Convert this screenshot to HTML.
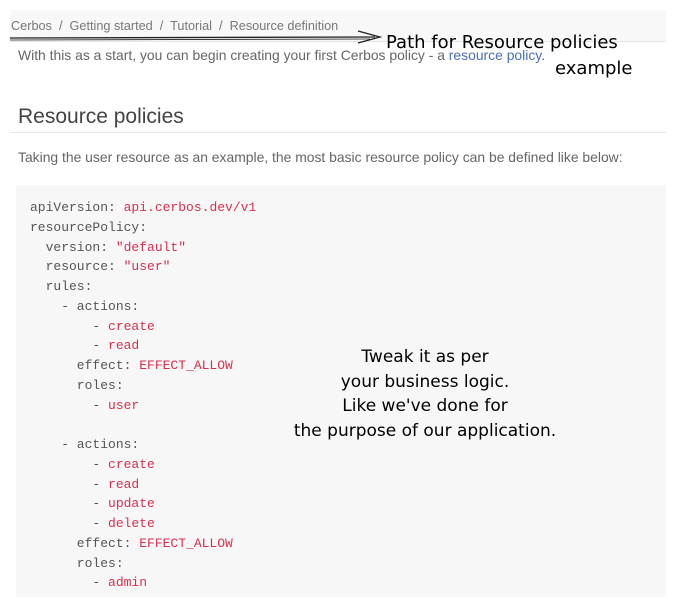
<!DOCTYPE html>
<html><head><style>
body{margin:0;width:676px;height:605px;background:#fff;position:relative;overflow:hidden;font-family:"Liberation Sans",sans-serif}
.a{position:absolute;white-space:nowrap}
.hand{font-family:"DejaVu Sans",sans-serif;color:#000;font-weight:normal}
.code{position:absolute;left:16px;top:185px;width:650px;height:412px;background:#f7f7f7}
.r{color:#d6304f}
</style></head><body>
<div class="a" style="left:10px;top:10px;width:656px;height:31px;background:#f8f8f8;border-bottom:1px solid #e6e6e6"></div>
<div class="a" style="left:11px;top:19px;font-size:12.7px;color:#777">Cerbos &nbsp;/&nbsp; Getting started &nbsp;/&nbsp; Tutorial &nbsp;/&nbsp; Resource definition</div>
<svg class="a" style="left:0;top:0" width="400" height="50"><path d="M10 38 L375 37 M358 31 L380 37 L358 43" stroke="#222" stroke-width="1.3" fill="none"/><path d="M10 40 L370 39" stroke="#222" stroke-width="0.8" fill="none"/></svg>
<div class="a hand" style="left:386px;top:32px;font-size:18px">Path for Resource policies</div>
<div class="a hand" style="left:555px;top:58px;font-size:18px">example</div>
<div class="a" style="left:18px;top:47px;font-size:13.9px;color:#666">With this as a start, you can begin creating your first Cerbos policy - a <span style="color:#4a6fb5">resource policy</span>.</div>
<div class="a" style="left:18px;top:105px;font-size:21px;color:#444">Resource policies</div>
<div class="a" style="left:10px;top:132px;width:656px;height:1px;background:#e6e6e6"></div>
<div class="a" style="left:18px;top:149px;font-size:13.9px;color:#666">Taking the user resource as an example, the most basic resource policy can be defined like below:</div>
<div class="code"></div>
<pre class="a" style="white-space:pre;margin:0;left:30px;top:198px;font:13px/19.75px 'Liberation Mono',monospace;color:#555">apiVersion: <span class="r">api.cerbos.dev/v1</span>
resourcePolicy:
  version: <span class="r">"default"</span>
  resource: <span class="r">"user"</span>
  rules:
    - actions:
        - <span class="r">create</span>
        - <span class="r">read</span>
      effect: <span class="r">EFFECT_ALLOW</span>
      roles:
        - <span class="r">user</span>

    - actions:
        - <span class="r">create</span>
        - <span class="r">read</span>
        - <span class="r">update</span>
        - <span class="r">delete</span>
      effect: <span class="r">EFFECT_ALLOW</span>
      roles:
        - <span class="r">admin</span></pre>
<div class="a hand" style="left:270px;top:345px;width:310px;text-align:center;font-size:17px;line-height:24.5px">Tweak it as per<br>your business logic.<br>Like we've done for<br>the purpose of our application.</div>
</body></html>
